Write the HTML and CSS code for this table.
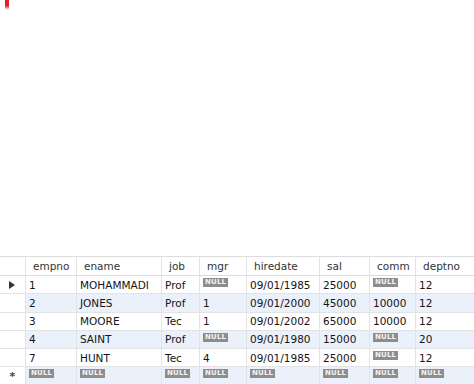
FILE: index.html
```html
<!DOCTYPE html>
<html lang="en">
<head>
	<meta charset="UTF-8">
	<title>emp</title>
	<link rel="stylesheet" href="styles.css">
</head>
<body>
	<div class="canvas">
		<span class="mark"></span>
	</div>
	<div class="grid">
		<div class="row head">
			<div class="cell gutter"></div>
			<div class="cell">empno</div>
			<div class="cell">ename</div>
			<div class="cell">job</div>
			<div class="cell">mgr</div>
			<div class="cell">hiredate</div>
			<div class="cell">sal</div>
			<div class="cell">comm</div>
			<div class="cell">deptno</div>
		</div>
		<div class="row">
			<div class="cell gutter"><span class="pointer"></span></div>
			<div class="cell">1</div>
			<div class="cell">MOHAMMADI</div>
			<div class="cell">Prof</div>
			<div class="cell"><span class="null">NULL</span></div>
			<div class="cell">09/01/1985</div>
			<div class="cell">25000</div>
			<div class="cell"><span class="null">NULL</span></div>
			<div class="cell">12</div>
		</div>
		<div class="row alt">
			<div class="cell gutter"></div>
			<div class="cell">2</div>
			<div class="cell">JONES</div>
			<div class="cell">Prof</div>
			<div class="cell">1</div>
			<div class="cell">09/01/2000</div>
			<div class="cell">45000</div>
			<div class="cell">10000</div>
			<div class="cell">12</div>
		</div>
		<div class="row">
			<div class="cell gutter"></div>
			<div class="cell">3</div>
			<div class="cell">MOORE</div>
			<div class="cell">Tec</div>
			<div class="cell">1</div>
			<div class="cell">09/01/2002</div>
			<div class="cell">65000</div>
			<div class="cell">10000</div>
			<div class="cell">12</div>
		</div>
		<div class="row alt">
			<div class="cell gutter"></div>
			<div class="cell">4</div>
			<div class="cell">SAINT</div>
			<div class="cell">Prof</div>
			<div class="cell"><span class="null">NULL</span></div>
			<div class="cell">09/01/1980</div>
			<div class="cell">15000</div>
			<div class="cell"><span class="null">NULL</span></div>
			<div class="cell">20</div>
		</div>
		<div class="row">
			<div class="cell gutter"></div>
			<div class="cell">7</div>
			<div class="cell">HUNT</div>
			<div class="cell">Tec</div>
			<div class="cell">4</div>
			<div class="cell">09/01/1985</div>
			<div class="cell">25000</div>
			<div class="cell"><span class="null">NULL</span></div>
			<div class="cell">12</div>
		</div>
		<div class="row alt newrow">
			<div class="cell gutter"><span class="star">*</span></div>
			<div class="cell"><span class="null">NULL</span></div>
			<div class="cell"><span class="null">NULL</span></div>
			<div class="cell"><span class="null">NULL</span></div>
			<div class="cell"><span class="null">NULL</span></div>
			<div class="cell"><span class="null">NULL</span></div>
			<div class="cell"><span class="null">NULL</span></div>
			<div class="cell"><span class="null">NULL</span></div>
			<div class="cell"><span class="null">NULL</span></div>
		</div>
	</div>
</body>
</html>
```

FILE: styles.css
```css
*{
	margin: 0;
	padding: 0;
	box-sizing: border-box;
}
body{
	width: 474px;
	height: 384px;
	overflow: hidden;
	background-color: #fff;
	font-family: "DejaVu Sans", Verdana, sans-serif;
	font-size: 10.5px;
	color: #141414;
}
.canvas{
	height: 256px;
	position: relative;
}
.mark{
	position: absolute;
	left: 5px;
	top: 0;
	width: 4px;
	height: 10px;
	background: linear-gradient(#e0202a 0, #e0202a 55%, rgba(224, 32, 42, 0));
	border-radius: 0 0 2px 2px;
}
.grid{
	border-top: 1px solid #dcdcdc;
}
.row{
	display: grid;
	grid-template-columns: 26px 51px 85px 38px 47px 73px 50px 46px 58px;
	height: 18.25px;
	border-bottom: 1px solid #e3e3e3;
}
.row.head{
	height: 19px;
	color: #333;
	border-bottom-color: #dcdcdc;
}
.row.alt{
	background-color: #eaf1fb;
}
.row.newrow{
	height: 20px;
	border-bottom: none;
}
.cell{
	display: flex;
	align-items: center;
	padding-left: 3px;
	border-right: 1px solid #e3e3e3;
	white-space: nowrap;
	overflow: hidden;
}
.head .cell{
	padding-left: 7px;
}
.cell:last-child{
	border-right: none;
}
.gutter{
	background-color: #fff;
	justify-content: center;
	padding-left: 0;
}
.pointer{
	width: 0;
	height: 0;
	border-left: 6px solid #333;
	border-top: 4px solid transparent;
	border-bottom: 4px solid transparent;
	margin-left: -2px;
}
.star{
	align-self: flex-start;
	margin-top: 4px;
	font-size: 11px;
	line-height: 11px;
	font-weight: bold;
	color: #444;
}
.null{
	align-self: flex-start;
	margin-top: 2px;
	display: inline-block;
	height: 9px;
	line-height: 9px;
	padding: 0 2px;
	background-color: #8d8d8d;
	color: #f4f4f4;
	font-size: 7px;
	font-weight: bold;
	letter-spacing: 0.2px;
}
```
